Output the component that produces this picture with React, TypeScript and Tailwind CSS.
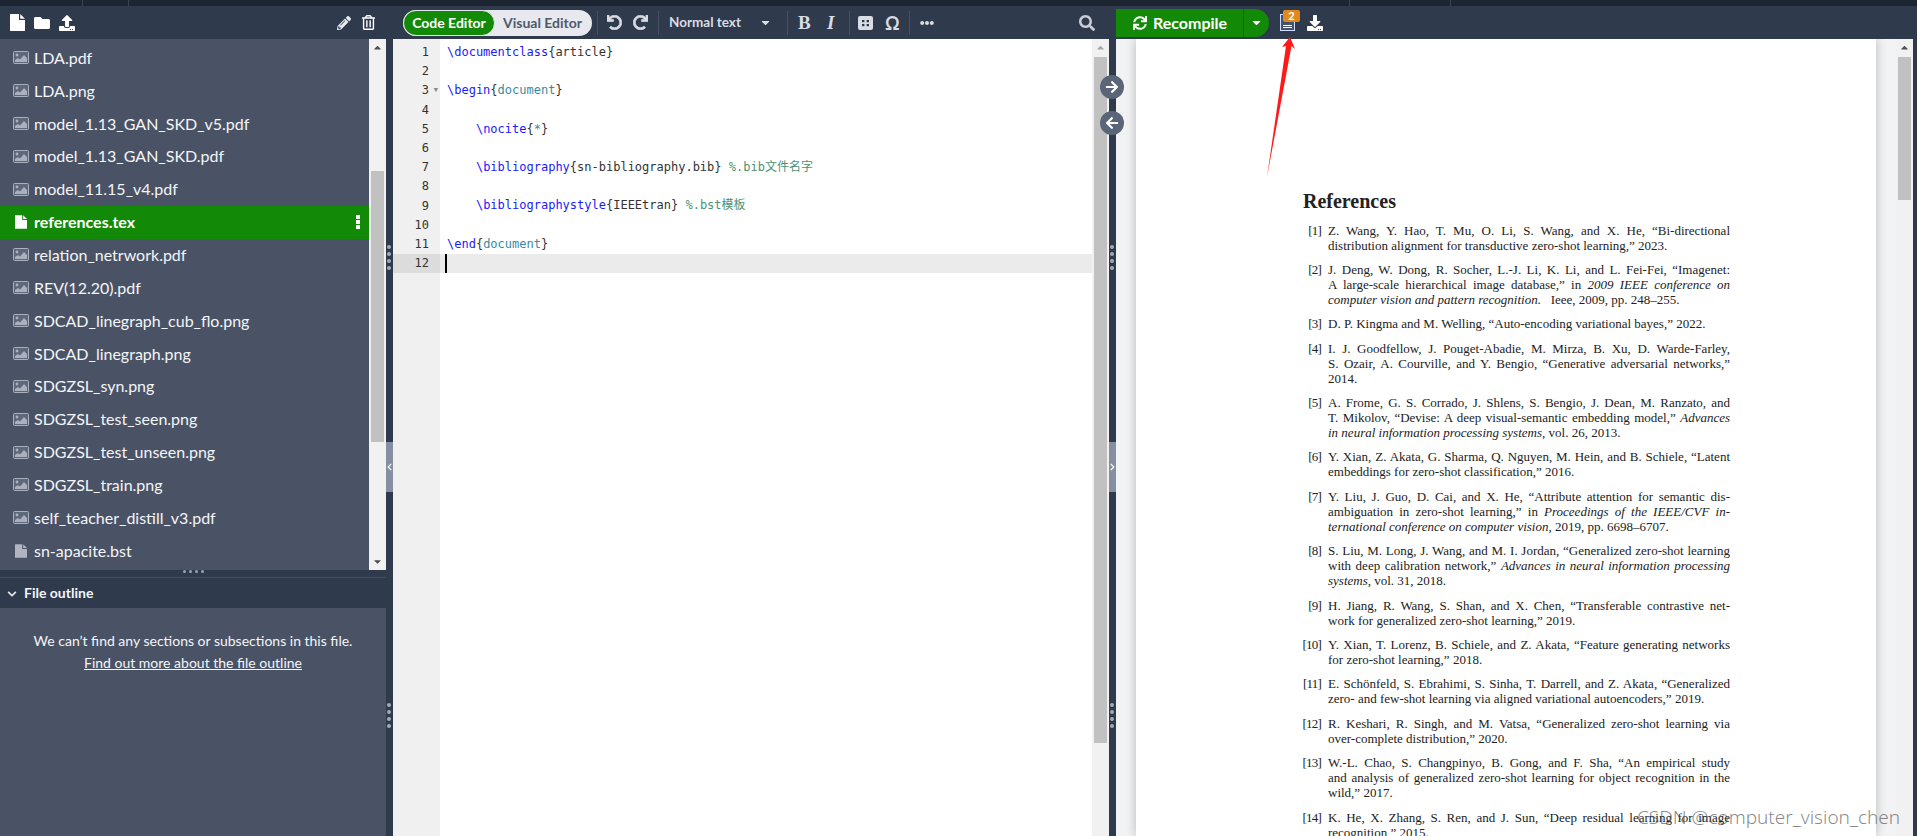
import type { ReactNode } from "react";
import {
  FaArrowLeft,
  FaArrowRight,
  FaCaretDown,
  FaCaretUp,
  FaChevronDown,
  FaChevronLeft,
  FaChevronRight,
  FaDownload,
  FaEllipsisH,
  FaFolder,
  FaPencilAlt,
  FaRedo,
  FaRegTrashAlt,
  FaSearch,
  FaSync,
  FaUndo,
  FaUpload,
} from "react-icons/fa";

type FileRow = { name: string; kind: "image" | "file"; active?: boolean };

const files: FileRow[] = [
  { name: "LDA.pdf", kind: "image" },
  { name: "LDA.png", kind: "image" },
  { name: "model_1.13_GAN_SKD_v5.pdf", kind: "image" },
  { name: "model_1.13_GAN_SKD.pdf", kind: "image" },
  { name: "model_11.15_v4.pdf", kind: "image" },
  { name: "references.tex", kind: "file", active: true },
  { name: "relation_netrwork.pdf", kind: "image" },
  { name: "REV(12.20).pdf", kind: "image" },
  { name: "SDCAD_linegraph_cub_flo.png", kind: "image" },
  { name: "SDCAD_linegraph.png", kind: "image" },
  { name: "SDGZSL_syn.png", kind: "image" },
  { name: "SDGZSL_test_seen.png", kind: "image" },
  { name: "SDGZSL_test_unseen.png", kind: "image" },
  { name: "SDGZSL_train.png", kind: "image" },
  { name: "self_teacher_distill_v3.pdf", kind: "image" },
  { name: "sn-apacite.bst", kind: "file" },
];

function ImageIcon() {
  return (
    <svg width="16" height="13" viewBox="0 0 16 13" className="shrink-0">
      <rect x="0.5" y="0.5" width="15" height="12" rx="1" fill="#5f6879" stroke="#aab0bd" />
      <circle cx="4" cy="4" r="1.4" fill="#aab0bd" />
      <path d="M2 11V9l3-2 2 1.5L11 4l3 3v4z" fill="#aab0bd" />
    </svg>
  );
}

// page with a folded corner, wider than the fa5 one
function FileIcon({ className }: { className: string }) {
  return (
    <svg viewBox="0 0 15 17" className={className} fill="currentColor">
      <path d="M0 0.5C0 0.2 0.2 0 0.5 0H9V6H15V16.5C15 16.8 14.8 17 14.5 17H0.5C0.2 17 0 16.8 0 16.5Z" />
      <path d="M10.2 0L15 4.8H10.2Z" />
    </svg>
  );
}

function Dots({ className }: { className: string }) {
  return (
    <div className={className}>
      <span className="size-[4px] rounded-full bg-[#a3aab7]" />
      <span className="size-[4px] rounded-full bg-[#a3aab7]" />
      <span className="size-[4px] rounded-full bg-[#a3aab7]" />
      <span className="size-[4px] rounded-full bg-[#a3aab7]" />
    </div>
  );
}

function Divider({ className }: { className: string }) {
  return <span className={`h-[24px] w-px bg-[#465064] ${className}`} />;
}

// vertical bar between panes, with its grip dots and collapse tab
function Splitter({ side }: { side: "left" | "right" }) {
  return (
    <div className="relative w-[7px] shrink-0 bg-[#2f3a4d]">
      <Dots className="absolute left-[1px] top-[206px] flex flex-col gap-[3px]" />
      <div className="absolute left-0 top-[403px] flex h-[50px] w-[7px] items-center justify-center bg-[#868fa1] text-white">
        {side === "left" ? <FaChevronLeft size={8} /> : <FaChevronRight size={8} />}
      </div>
      <Dots className="absolute left-[1px] top-[664px] flex flex-col gap-[3px]" />
    </div>
  );
}

function Sidebar() {
  return (
    <div className="flex w-[386px] shrink-0 flex-col bg-[#2f3a4d]">
      <div className="flex h-[531px] shrink-0">
        <div className="flex w-[369px] flex-col overflow-hidden bg-[#4a5366] pt-[3px]">
          {files.map((f) => (
            <div
              key={f.name}
              className={`flex h-[32.85px] shrink-0 items-center pb-[1px] pl-[13px] text-[16px] ${
                f.active ? "bg-[#138a07] font-bold text-white" : "text-[#f4f5f7]"
              }`}
            >
              <span className="flex w-[21px] shrink-0">
                {f.kind === "image" ? (
                  <ImageIcon />
                ) : (
                  <FileIcon
                    className={
                      f.active
                        ? "ml-[2px] h-[14px] w-[12px] text-white"
                        : "ml-[2px] h-[14px] w-[12px] text-[#b0b5c1]"
                    }
                  />
                )}
              </span>
              <span className="whitespace-nowrap">{f.name}</span>
              {f.active && (
                <span className="ml-auto mr-[9px] flex flex-col gap-[1px]">
                  <span className="size-[4px] bg-white" />
                  <span className="size-[4px] bg-white" />
                  <span className="size-[4px] bg-white" />
                </span>
              )}
            </div>
          ))}
        </div>
        <div className="flex w-[17px] flex-col items-center bg-[#f1f1f1] text-[#505050]">
          <FaCaretUp size={11} className="mt-[3px]" />
          <div className="mt-[118px] h-[271px] w-[13px] bg-[#c1c1c1]" />
          <FaCaretDown size={11} className="mb-[3px] mt-auto" />
        </div>
      </div>
      <div className="flex h-[7px] shrink-0 justify-center gap-[3px]">
        <span className="size-[3px] rounded-full bg-[#9aa2b0]" />
        <span className="size-[3px] rounded-full bg-[#9aa2b0]" />
        <span className="size-[3px] rounded-full bg-[#9aa2b0]" />
        <span className="size-[3px] rounded-full bg-[#9aa2b0]" />
      </div>
      <div className="flex h-[31px] shrink-0 items-center gap-[7px] border-t border-[#465064] pb-[2px] pl-[7px] text-[14px] font-bold text-[#f4f5f7]">
        <FaChevronDown size={10} className="mt-[3px] text-[#e6e8ec]" />
        File outline
      </div>
      <div className="flex-1 bg-[#4a5366] pt-[22px] text-center text-[14px] leading-[22px] text-[#f4f5f7]">
        <p>We can&#8217;t find any sections or subsections in this file.</p>
        <p className="underline">Find out more about the file outline</p>
      </div>
    </div>
  );
}

const cmd = "text-[#1a1aff]";
const arg = "text-[#3b8a9c]";
const comment = "text-[#4f9173]";

const codeLines: ReactNode[] = [
  <>
    <span className={cmd}>\documentclass</span>
    {"{article}"}
  </>,
  "",
  <>
    <span className={cmd}>\begin</span>
    {"{"}
    <span className={arg}>document</span>
    {"}"}
  </>,
  "",
  <>
    {"    "}
    <span className={cmd}>\nocite</span>
    {"{"}
    <span className={arg}>*</span>
    {"}"}
  </>,
  "",
  <>
    {"    "}
    <span className={cmd}>\bibliography</span>
    {"{sn-bibliography.bib} "}
    <span className={comment}>%.bib文件名字</span>
  </>,
  "",
  <>
    {"    "}
    <span className={cmd}>\bibliographystyle</span>
    {"{IEEEtran} "}
    <span className={comment}>%.bst模板</span>
  </>,
  "",
  <>
    <span className={cmd}>\end</span>
    {"{"}
    <span className={arg}>document</span>
    {"}"}
  </>,
  "",
];

function Editor() {
  return (
    <div className="flex w-[716px] shrink-0 bg-white font-['DejaVu_Sans_Mono','Noto_Sans_CJK_SC',monospace] text-[12px] leading-[19.18px] text-[#333]">
      <div className="w-[47px] shrink-0 bg-[#f0f0f0] pt-[4px] text-[#333]">
        {codeLines.map((_, i) => (
          <div key={i} className={`relative pr-[11px] text-right ${i === 11 ? "bg-[#dcdcdc]" : ""}`}>
            {i + 1}
            {i === 2 && <span className="absolute right-[2px] top-0 text-[7px] text-[#888]">▼</span>}
          </div>
        ))}
      </div>
      <div className="flex-1 pt-[4px]">
        {codeLines.map((line, i) => (
          <div key={i} className={`h-[19.18px] whitespace-pre pl-[7px] ${i === 11 ? "bg-[#ebebeb]" : ""}`}>
            {i === 11 ? <span className="ml-[-2px] inline-block h-[19px] w-[2px] bg-black align-top" /> : line}
          </div>
        ))}
      </div>
      <div className="flex w-[17px] shrink-0 flex-col items-center bg-[#f1f1f1] text-[#a8a8a8]">
        <FaCaretUp size={11} className="mt-[3px]" />
        <div className="mt-[4px] h-[686px] w-[13px] bg-[#c1c1c1]" />
      </div>
    </div>
  );
}

type Ref = { n: number; lines: { text: ReactNode; full?: boolean }[] };

const refs: Ref[] = [
  {
    n: 1,
    lines: [
      { text: "Z. Wang, Y. Hao, T. Mu, O. Li, S. Wang, and X. He, “Bi-directional", full: true },
      { text: "distribution alignment for transductive zero-shot learning,” 2023." },
    ],
  },
  {
    n: 2,
    lines: [
      { text: "J. Deng, W. Dong, R. Socher, L.-J. Li, K. Li, and L. Fei-Fei, “Imagenet:", full: true },
      { text: <>A large-scale hierarchical image database,” in <i>2009 IEEE conference on</i></>, full: true },
      { text: <><i>computer vision and pattern recognition.</i>&nbsp;&nbsp; Ieee, 2009, pp. 248–255.</> },
    ],
  },
  { n: 3, lines: [{ text: "D. P. Kingma and M. Welling, “Auto-encoding variational bayes,” 2022." }] },
  {
    n: 4,
    lines: [
      { text: "I. J. Goodfellow, J. Pouget-Abadie, M. Mirza, B. Xu, D. Warde-Farley,", full: true },
      { text: "S. Ozair, A. Courville, and Y. Bengio, “Generative adversarial networks,”", full: true },
      { text: "2014." },
    ],
  },
  {
    n: 5,
    lines: [
      { text: "A. Frome, G. S. Corrado, J. Shlens, S. Bengio, J. Dean, M. Ranzato, and", full: true },
      { text: <>T. Mikolov, “Devise: A deep visual-semantic embedding model,” <i>Advances</i></>, full: true },
      { text: <><i>in neural information processing systems</i>, vol. 26, 2013.</> },
    ],
  },
  {
    n: 6,
    lines: [
      { text: "Y. Xian, Z. Akata, G. Sharma, Q. Nguyen, M. Hein, and B. Schiele, “Latent", full: true },
      { text: "embeddings for zero-shot classification,” 2016." },
    ],
  },
  {
    n: 7,
    lines: [
      { text: "Y. Liu, J. Guo, D. Cai, and X. He, “Attribute attention for semantic dis-", full: true },
      { text: <>ambiguation in zero-shot learning,” in <i>Proceedings of the IEEE/CVF in-</i></>, full: true },
      { text: <><i>ternational conference on computer vision</i>, 2019, pp. 6698–6707.</> },
    ],
  },
  {
    n: 8,
    lines: [
      { text: "S. Liu, M. Long, J. Wang, and M. I. Jordan, “Generalized zero-shot learning", full: true },
      { text: <>with deep calibration network,” <i>Advances in neural information processing</i></>, full: true },
      { text: <><i>systems</i>, vol. 31, 2018.</> },
    ],
  },
  {
    n: 9,
    lines: [
      { text: "H. Jiang, R. Wang, S. Shan, and X. Chen, “Transferable contrastive net-", full: true },
      { text: "work for generalized zero-shot learning,” 2019." },
    ],
  },
  {
    n: 10,
    lines: [
      { text: "Y. Xian, T. Lorenz, B. Schiele, and Z. Akata, “Feature generating networks", full: true },
      { text: "for zero-shot learning,” 2018." },
    ],
  },
  {
    n: 11,
    lines: [
      { text: "E. Schönfeld, S. Ebrahimi, S. Sinha, T. Darrell, and Z. Akata, “Generalized", full: true },
      { text: "zero- and few-shot learning via aligned variational autoencoders,” 2019." },
    ],
  },
  {
    n: 12,
    lines: [
      { text: "R. Keshari, R. Singh, and M. Vatsa, “Generalized zero-shot learning via", full: true },
      { text: "over-complete distribution,” 2020." },
    ],
  },
  {
    n: 13,
    lines: [
      { text: "W.-L. Chao, S. Changpinyo, B. Gong, and F. Sha, “An empirical study", full: true },
      { text: "and analysis of generalized zero-shot learning for object recognition in the", full: true },
      { text: "wild,” 2017." },
    ],
  },
  {
    n: 14,
    lines: [
      { text: "K. He, X. Zhang, S. Ren, and J. Sun, “Deep residual learning for image", full: true },
      { text: "recognition,” 2015." },
    ],
  },
];

function PdfPane() {
  return (
    <div className="flex min-w-0 flex-1 overflow-hidden bg-[#f1f3f5]">
      <div className="ml-[20px] w-[740px] shrink-0 bg-white pl-[167px] pt-[150px] font-['Liberation_Serif',serif] text-[#222] shadow-[0_0_10px_rgba(0,0,0,0.25)]">
        <h2 className="text-[20px] font-bold leading-[24px] text-[#222]">References</h2>
        <div className="mt-[9.5px] flex flex-col gap-[9.4px] text-[13px] leading-[15px]">
          {refs.map((r) => (
            <div key={r.n} className="flex">
              <span className="flex w-[18px] shrink-0 justify-end whitespace-nowrap tracking-[-0.8px]">[{r.n}]</span>
              <div className="ml-[7px] w-[402px]">
                {r.lines.map((l, i) => (
                  <div
                    key={i}
                    className={l.full ? "text-justify [text-align-last:justify]" : "whitespace-nowrap"}
                  >
                    {l.text}
                  </div>
                ))}
              </div>
            </div>
          ))}
        </div>
      </div>
      <div className="ml-[20px] flex w-[17px] shrink-0 flex-col items-center bg-[#f1f1f1] text-[#505050]">
        <FaCaretUp size={11} className="mt-[3px]" />
        <div className="mt-[4px] h-[143px] w-[13px] bg-[#c1c1c1]" />
      </div>
      <div className="w-[4px] shrink-0 bg-[#2f3a4d]" />
    </div>
  );
}

function Toolbar() {
  return (
    <div className="flex h-[33px] shrink-0 items-center bg-[#2f3a4d] text-[#d9dce2]">
      <div className="flex w-[393px] shrink-0 items-center text-white">
        <FileIcon className="ml-[10px] h-[17px] w-[15px]" />
        <FaFolder size={16} className="ml-[9px]" />
        <FaUpload size={16} className="ml-[9px]" />
        <FaPencilAlt size={14} className="ml-[262px] text-[#e8eaee]" />
        <FaRegTrashAlt size={15} className="ml-[10px]" />
      </div>
      <div className="flex w-[723px] shrink-0 items-center">
        <div className="ml-[10px] flex h-[26px] w-[189px] items-center rounded-full bg-[#e7e9ee] text-[14px] font-bold">
          <span className="flex h-full w-[92px] items-center justify-center rounded-full border border-[#e7e9ee] bg-[#138a07] text-white">
            Code Editor
          </span>
          <span className="ml-[8px] text-[#4f5a6e]">Visual Editor</span>
        </div>
        <Divider className="ml-[5px]" />
        <FaUndo size={15} className="ml-[9px]" stroke="currentColor" strokeWidth={24} />
        <FaRedo size={15} className="ml-[11px]" stroke="currentColor" strokeWidth={24} />
        <Divider className="ml-[10px]" />
        <div className="ml-[10px] flex w-[103px] items-center justify-between text-[13.5px]">
          <span className="font-bold">Normal text</span>
          <FaCaretDown size={13} />
        </div>
        <Divider className="ml-[15px]" />
        <span className="ml-[10px] w-[15px] font-['Liberation_Serif',serif] text-[19px] font-bold leading-none">B</span>
        <span className="ml-[14px] w-[8px] font-['Liberation_Serif',serif] text-[19px] font-bold italic leading-none">I</span>
        <Divider className="ml-[14px]" />
        <svg width="15" height="14" viewBox="0 0 15 14" className="ml-[8px]">
          <rect width="15" height="14" rx="2" fill="#d9dce2" />
          <rect x="4" y="4" width="2.4" height="2.2" fill="#2f3a4d" />
          <rect x="8.6" y="4" width="2.4" height="2.2" fill="#2f3a4d" />
          <rect x="4" y="8" width="2.4" height="2.2" fill="#2f3a4d" />
          <rect x="8.6" y="8" width="2.4" height="2.2" fill="#2f3a4d" />
        </svg>
        <span className="ml-[12px] w-[13px] text-[18px] font-bold leading-none">Ω</span>
        <Divider className="ml-[11px]" />
        <FaEllipsisH size={14} className="ml-[10px]" />
        <FaSearch size={16} className="ml-auto mr-[21px] text-[#c9cdd5]" />
      </div>
      <div className="flex h-[28px] w-[153px] shrink-0 items-center rounded-r-full bg-[#138a07] text-white">
        <FaSync size={14} className="ml-[17px]" />
        <span className="ml-[6px] text-[16px] font-bold">Recompile</span>
        <span className="ml-auto flex h-full w-[26px] items-center justify-center border-l border-[#0f6f06]">
          <FaCaretDown size={13} />
        </span>
      </div>
      <div className="relative ml-[11px] flex h-[17px] w-[15px] flex-col items-center justify-end gap-[1px] border border-[#cfe0ff] bg-[#46526a] pb-[2px]">
        <span className="h-[1px] w-[9px] bg-white" />
        <span className="h-[1px] w-[9px] bg-white" />
        <span className="absolute left-[2px] top-[-5px] flex h-[12px] w-[17px] items-center justify-center rounded-[2px] bg-[#e08a1e] text-[11px] font-bold text-white">
          2
        </span>
      </div>
      <FaDownload size={16} className="ml-[12px] text-white" />
    </div>
  );
}

export default function App() {
  return (
    <div className="relative flex h-screen w-full flex-col overflow-hidden bg-[#2f3a4d] font-['Lato',sans-serif]">
      <div className="flex h-[6px] shrink-0 bg-[#1c2531]">
        <div className="w-[83px] border-r border-[#3a4452]" />
        <div className="w-[46px] border-r border-[#3a4452]" />
        <div className="w-[1221px] border-r border-[#3a4452]" />
        <div className="w-[101px] border-r border-[#3a4452]" />
      </div>
      <Toolbar />
      <div className="flex min-h-0 flex-1">
        <Sidebar />
        <Splitter side="left" />
        <Editor />
        <Splitter side="right" />
        <PdfPane />
      </div>

      {/* sync buttons sit over the right splitter */}
      <div className="absolute left-[1100px] top-[75px] flex size-[24px] items-center justify-center rounded-full bg-[#5a6578] text-white">
        <FaArrowRight size={14} />
      </div>
      <div className="absolute left-[1100px] top-[111px] flex size-[24px] items-center justify-center rounded-full bg-[#5a6578] text-white">
        <FaArrowLeft size={14} />
      </div>

      {/* red annotation arrow and watermark pasted on the screenshot */}
      <svg width="40" height="145" viewBox="0 0 40 145" className="absolute left-[1260px] top-[35px]">
        <path d="M30 2L35 14L31.5 11L7 142L26 11L22 12Z" fill="#ff1a1a" />
      </svg>
      <span className="absolute left-[1637px] top-[803px] whitespace-nowrap font-['Noto_Sans',sans-serif] text-[19px] font-light text-[#555]/70">
        CSDN @computer_vision_chen
      </span>
    </div>
  );
}
